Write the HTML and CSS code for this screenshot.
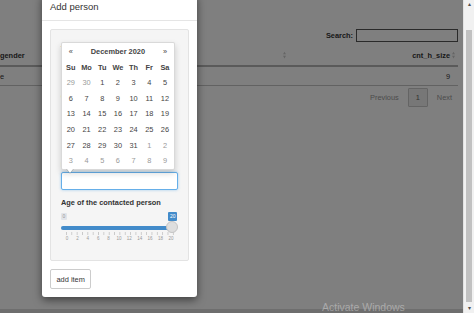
FILE: index.html
```html
<!DOCTYPE html>
<html>
<head>
    <meta charset="utf-8" />
    <title>contacts</title>
<link rel="stylesheet" href="styles.css">
</head>
<body>
<div class="screen">
  <div class="viewport">
    <!-- page under the modal -->
    <div class="page">
      <div class="toolbar">
        <label class="search">Search: <input type="text"></label>
      </div>
      <table class="grid">
        <thead>
          <tr>
            <th class="first">gender<svg class="sort" viewBox="0 0 4 9"><path d="M2 0L4 3.5H0Z M2 9L4 5.5H0Z"/></svg></th>
            <th class="num">cnt_h_size<svg class="sort" viewBox="0 0 4 9"><path d="M2 0L4 3.5H0Z M2 9L4 5.5H0Z"/></svg></th>
          </tr>
        </thead>
        <tbody>
          <tr><td class="first">e</td><td class="num">9</td></tr>
        </tbody>
      </table>
      <div class="pager">
        <span class="pg-off">Previous</span>
        <span class="pg-cur">1</span>
        <span class="pg-off">Next</span>
      </div>
    </div>
    <div class="strip"></div>

    <div class="backdrop"></div>

    <!-- modal -->
    <div class="modal">
      <div class="modal-head"><h4>Add person</h4></div>
      <div class="modal-body">
        <div class="well">
          <div class="form-group first-group">
            <label class="lbl">Tested</label>
            <div class="radio"><input type="radio" name="t"> yes</div>
            <div class="radio"><input type="radio" name="t"> no</div>
          </div>
          <div class="form-group">
            <label class="lbl">Gender</label>
            <div class="radio"><input type="radio" name="g"> male</div>
            <div class="radio"><input type="radio" name="g"> female</div>
            <div class="radio"><input type="radio" name="g"> other</div>
          </div>
          <div class="form-group date-group">
            <label class="lbl">Date of contact</label>
            <div class="date-wrap">
              <input class="field focus" type="text">
              <div class="datepicker">
                <table>
                  <tr class="dp-head"><th>&laquo;</th><th colspan="5">December 2020</th><th>&raquo;</th></tr>
                  <tr class="dp-dow"><th>Su</th><th>Mo</th><th>Tu</th><th>We</th><th>Th</th><th>Fr</th><th>Sa</th></tr>
                  <tr><td class="old">29</td><td class="old">30</td><td>1</td><td>2</td><td>3</td><td>4</td><td>5</td></tr>
                  <tr><td>6</td><td>7</td><td>8</td><td>9</td><td>10</td><td>11</td><td>12</td></tr>
                  <tr><td>13</td><td>14</td><td>15</td><td>16</td><td>17</td><td>18</td><td>19</td></tr>
                  <tr><td>20</td><td>21</td><td>22</td><td>23</td><td>24</td><td>25</td><td>26</td></tr>
                  <tr><td>27</td><td>28</td><td>29</td><td>30</td><td>31</td><td class="new">1</td><td class="new">2</td></tr>
                  <tr><td class="new">3</td><td class="new">4</td><td class="new">5</td><td class="new">6</td><td class="new">7</td><td class="new">8</td><td class="new">9</td></tr>
                </table>
              </div>
            </div>
          </div>
          <div class="form-group last">
            <label class="lbl">Age of the contacted person</label>
            <div class="range">
              <div class="range-labels"><span class="r-min">0</span><span class="r-max">20</span></div>
              <div class="range-line"><span class="range-bar"></span><span class="range-handle"></span></div>
              <div class="range-grid">
                <span>0</span><span>2</span><span>4</span><span>6</span><span>8</span><span>10</span>
                <span>12</span><span>14</span><span>16</span><span>18</span><span>20</span>
              </div>
            </div>
          </div>
        </div>
        <button class="btn">add item</button>
      </div>
    </div>

    <div class="activate">Activate Windows</div>
  </div>

  <!-- browser scrollbar -->
  <div class="scrollbar">
    <div class="sb-btn">&#9652;</div>
    <div class="sb-track"><div class="sb-thumb"></div></div>
    <div class="sb-btn">&#9662;</div>
  </div>
</div>
</body>
</html>
```

FILE: styles.css
```css
html, body {
    margin: 0;
    height: 100%;
}
body {
    font-family: "Liberation Sans", Arial, sans-serif;
    font-size: 7.4px;
    color: #333;
    overflow: hidden;
}

.screen {
    display: flex;
    width: 474px;
    height: 313px;
}

.viewport {
    position: relative;
    flex: 1;
    display: flex;
    flex-direction: column;
    background: #fff;
    overflow: hidden;
}

/* page under the backdrop */
.page {
    flex: 1;
    padding: 29px 5px 0 0;
}
.toolbar {
    display: flex;
    justify-content: flex-end;
}
.search {
    display: flex;
    align-items: center;
    gap: 3px;
    font-weight: bold;
}
.search input {
    width: 102px;
    height: 13px;
    box-sizing: border-box;
    border: 1px solid #555;
    margin: 0;
    padding: 0;
}

.grid {
    width: 100%;
    margin-top: 3px;
    border-collapse: collapse;
}
.grid th {
    height: 20px;
    padding: 0 8px 0 5px;
    text-align: left;
    position: relative;
    border-bottom: 2px solid #b5b5b5;
}
.grid td {
    height: 18px;
    padding: 0 8px 0 5px;
    border-bottom: 1px solid #c4c4c4;
}
.grid .first { padding-left: 0; width: 281px; }
.grid .num { text-align: right; }
.sort {
    position: absolute;
    right: 3px;
    top: 6px;
    width: 3px;
    height: 8px;
    fill: #333;
    opacity: .25;
}

.pager {
    display: flex;
    justify-content: flex-end;
    align-items: center;
    gap: 9px;
    margin-top: 2px;
    padding-right: 6px;
}
.pg-off { color: #999; }
.pg-cur {
    width: 20px;
    height: 19px;
    box-sizing: border-box;
    border: 1px solid #c9c9c9;
    background: #eee;
    color: #666;
    display: flex;
    align-items: center;
    justify-content: center;
    border-radius: 1px;
}

.strip {
    height: 4px;
    background: #dcdcdc;
}

.backdrop {
    position: absolute;
    inset: 0;
    background: rgba(0, 0, 0, .5);
}

/* modal */
.modal {
    position: absolute;
    left: 42px;
    top: -6px;
    width: 155px;
    background: #fff;
    border-radius: 3px;
    box-shadow: 0 3px 9px rgba(0, 0, 0, .5);
}
.modal-head {
    padding: 8px;
    border-bottom: 1px solid #e5e5e5;
}
.modal-head h4 {
    margin: 0;
    font-size: 9.5px;
    font-weight: normal;
    line-height: 1.1;
}
.modal-body {
    padding: 8px;
}

.well {
    background: #f5f5f5;
    border: 1px solid #e3e3e3;
    border-radius: 2px;
    padding: 9px 10px;
    margin-bottom: 8px;
}
.form-group { margin-bottom: 8px; }
.form-group.first-group { margin-top: 5px; }
.form-group.last { margin-bottom: 10px; }
.lbl {
    display: block;
    font-weight: bold;
    line-height: 10px;
    margin-bottom: 2px;
}
.field {
    display: block;
    width: 100%;
    height: 18px;
    box-sizing: border-box;
    margin: 0;
    border: 1px solid #ccc;
    border-radius: 2px;
    background: #fff;
}
.field.focus {
    border-color: #66afe9;
    box-shadow: 0 0 3px rgba(102, 175, 233, .6);
}
.radio {
    display: flex;
    align-items: center;
    height: 14px;
}
.radio input {
    width: 6px;
    height: 6px;
    margin: 0 4px 0 0;
}
.date-group { margin-top: 14px; }

/* datepicker dropdown */
.date-wrap { position: relative; }
.datepicker {
    position: absolute;
    left: 0;
    bottom: 100%;
    margin-bottom: 2px;
    padding: 1px;
    background: #fff;
    border: 1px solid rgba(0, 0, 0, .15);
    border-radius: 2px;
    box-shadow: 0 3px 6px rgba(0, 0, 0, .175);
}
.datepicker:before,
.datepicker:after {
    content: "";
    position: absolute;
    left: 4px;
    border-left: 4px solid transparent;
    border-right: 4px solid transparent;
}
.datepicker:before {
    bottom: -5px;
    border-top: 5px solid rgba(0, 0, 0, .15);
}
.datepicker:after {
    left: 5px;
    bottom: -4px;
    border-left-width: 3px;
    border-right-width: 3px;
    border-top: 4px solid #fff;
}
.datepicker table {
    border-collapse: collapse;
}
.datepicker th,
.datepicker td {
    width: 15.7px;
    height: 15.6px;
    padding: 0;
    text-align: center;
    font-size: 7.4px;
    color: #444;
}
.datepicker th { font-weight: bold; }
.dp-head th:first-child,
.dp-head th:last-child { font-weight: normal; }
.datepicker .old,
.datepicker .new { color: #999; }

/* range slider */
.range {
    padding-top: 2px;
}
.range-labels {
    display: flex;
    justify-content: space-between;
    align-items: center;
    height: 9px;
}
.r-min,
.r-max {
    font-size: 5px;
    line-height: 7px;
    padding: 0 1.5px;
    border-radius: 1px;
}
.r-min {
    background: #e1e4e9;
    color: #999;
}
.r-max {
    background: #428bca;
    color: #fff;
    line-height: 9px;
    margin-right: 1px;
}
.range-line {
    position: relative;
    height: 4px;
    margin: 5px 4px 0 0;
    background: #e1e4e9;
    border-radius: 2px;
}
.range-bar {
    display: block;
    height: 100%;
    width: 100%;
    background: #428bca;
    border-radius: 2px;
}
.range-handle {
    position: absolute;
    right: -4px;
    top: -5px;
    width: 12px;
    height: 12px;
    box-sizing: border-box;
    border-radius: 50%;
    background: #dedede;
    border: 1px solid #c4c4c4;
}
.range-grid {
    display: flex;
    justify-content: space-between;
    margin: 2px 4px 0 3px;
    padding-top: 4px;
    font-size: 4.5px;
    color: #999;
    background-image: linear-gradient(to right, #c8c8c8 1px, transparent 1px);
    background-size: 5.35px 3px;
    background-repeat: repeat-x;
    background-position: 2px 0;
}
.range-grid span {
    width: 6px;
    text-align: center;
}

.btn {
    font-family: inherit;
    font-size: 7.4px;
    color: #333;
    background: #fff;
    border: 1px solid #ccc;
    border-radius: 2px;
    height: 20px;
    padding: 0 5.5px;
    margin: 0;
}

.activate {
    position: absolute;
    left: 322px;
    top: 301px;
    font-size: 10.5px;
    color: rgba(255, 255, 255, .35);
}

/* scrollbar */
.scrollbar {
    width: 11px;
    display: flex;
    flex-direction: column;
    background: #f1f1f1;
    border-left: 1px solid #e2e2e2;
    box-sizing: border-box;
}
.sb-btn {
    height: 9px;
    font-size: 6px;
    line-height: 9px;
    text-align: center;
    color: #505050;
}
.sb-track {
    flex: 1;
    padding: 21px 2px 2px 2px;
    display: flex;
}
.sb-thumb {
    flex: 1;
    background: #c1c1c1;
}
```
